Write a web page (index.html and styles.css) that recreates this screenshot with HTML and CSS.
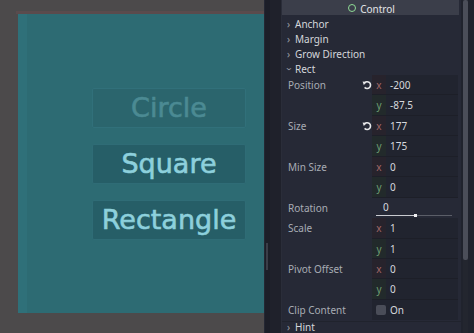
FILE: index.html
```html
<!DOCTYPE html>
<html>
<head>
<meta charset="utf-8">
<link rel="stylesheet" href="styles.css">
</head>
<body>
<div class="app">
  <div class="viewport">
    <div class="axis-x"></div>
    <div class="canvas">
      <div class="buttons">
        <div class="btn disabled">Circle</div>
        <div class="btn">Square</div>
        <div class="btn">Rectangle</div>
      </div>
    </div>
  </div>
  <div class="split"><div class="grab"></div></div>
  <div class="inspector">
    <div class="strip"></div>
    <div class="panel">
      <div class="header"><span class="node-icon"></span>Control</div>
      <div class="section"><span class="chev">›</span>Anchor</div>
      <div class="section"><span class="chev">›</span>Margin</div>
      <div class="section"><span class="chev">›</span>Grow Direction</div>
      <div class="section"><span class="chev down">›</span>Rect</div>

      <div class="prop">
        <div class="label">Position</div>
        <div class="revert"><svg viewBox="0 0 10 10" width="10" height="10"><path d="M2.3 3.2 A3.4 3.4 0 1 1 2.6 7.4" fill="none" stroke="#e8e8ea" stroke-width="1.6"/><path d="M0.6 1.4 L4.6 1.9 L1.8 4.9 Z" fill="#e8e8ea"/></svg></div>
        <div class="fields">
          <div class="field"><span class="ax x">x</span><span class="val">-200</span></div>
          <div class="field"><span class="ax y">y</span><span class="val">-87.5</span></div>
        </div>
      </div>
      <div class="prop">
        <div class="label">Size</div>
        <div class="revert"><svg viewBox="0 0 10 10" width="10" height="10"><path d="M2.3 3.2 A3.4 3.4 0 1 1 2.6 7.4" fill="none" stroke="#e8e8ea" stroke-width="1.6"/><path d="M0.6 1.4 L4.6 1.9 L1.8 4.9 Z" fill="#e8e8ea"/></svg></div>
        <div class="fields">
          <div class="field"><span class="ax x">x</span><span class="val">177</span></div>
          <div class="field"><span class="ax y">y</span><span class="val">175</span></div>
        </div>
      </div>
      <div class="prop">
        <div class="label">Min Size</div>
        <div class="fields">
          <div class="field"><span class="ax x">x</span><span class="val">0</span></div>
          <div class="field"><span class="ax y">y</span><span class="val">0</span></div>
        </div>
      </div>
      <div class="prop single">
        <div class="label">Rotation</div>
        <div class="slider">
          <span class="sval">0</span>
          <div class="track"><div class="fill"></div><div class="knob"></div></div>
        </div>
      </div>
      <div class="prop">
        <div class="label">Scale</div>
        <div class="fields">
          <div class="field"><span class="ax x">x</span><span class="val">1</span></div>
          <div class="field"><span class="ax y">y</span><span class="val">1</span></div>
        </div>
      </div>
      <div class="prop">
        <div class="label">Pivot Offset</div>
        <div class="fields">
          <div class="field"><span class="ax x">x</span><span class="val">0</span></div>
          <div class="field"><span class="ax y">y</span><span class="val">0</span></div>
        </div>
      </div>
      <div class="prop single">
        <div class="label">Clip Content</div>
        <div class="check"><span class="box"></span><span class="val">On</span></div>
      </div>
      <div class="section hint"><span class="chev">›</span>Hint</div>
    </div>
    <div class="scroll"><div class="thumb"></div></div>
  </div>
</div>
</body>
</html>
```

FILE: styles.css
```css
* { box-sizing: border-box; }
html, body { margin: 0; padding: 0; }
body {
  width: 474px;
  height: 333px;
  overflow: hidden;
  background: #20232d;
  font-family: "Noto Sans", "Open Sans", sans-serif;
}
.app {
  display: flex;
  width: 474px;
  height: 333px;
}
.viewport {
  width: 264px;
  height: 333px;
  background: #4c4a4b;
  display: flex;
  flex-direction: column;
  padding-top: 11px;
}
.axis-x {
  height: 3px;
  margin-left: 16px;
  background: #5a4b4d;
}
.canvas {
  margin-left: 18px;
  width: 246px;
  height: 299px;
  background: #2d6b73;
  border-left: 9px solid #2f7079;
  padding-top: 74px;
  padding-left: 65px;
}
.buttons {
  width: 154px;
  display: flex;
  flex-direction: column;
  gap: 16px;
}
.btn {
  height: 40px;
  background: #265e67;
  border: 1px solid #2f6c76;
  border-radius: 2px;
  color: #8dd0dc;
  -webkit-text-stroke: 0.6px #8dd0dc;
  font-family: "DejaVu Sans", sans-serif;
  font-size: 27px;
  line-height: 38px;
  text-align: center;
}
.btn.disabled {
  background: #2b656d;
  border-color: #31707a;
  color: #4b8a93;
  -webkit-text-stroke: 0.6px #4b8a93;
}
.split {
  width: 6px;
  background: #1c1e28;
  border-left: 1px solid #242733;
  position: relative;
}
.grab {
  position: absolute;
  left: 1px;
  top: 243px;
  width: 2px;
  height: 27px;
  background: #3a3d48;
}
.inspector {
  flex: 1;
  display: flex;
  background: #20232d;
}
.strip {
  width: 12px;
  background: #1f212b;
  border-right: 1px solid #2a2d39;
}
.panel {
  width: 179px;
  background: #262936;
  display: flex;
  flex-direction: column;
  color: #d4d6db;
  font-size: 10px;
}
.header {
  height: 15px;
  margin-right: 2px;
  background: #3b3e4a;
  display: flex;
  align-items: center;
  justify-content: center;
  gap: 4px;
  color: #e2e3e6;
  font-size: 10px;
  padding-left: 2px;
  padding-top: 2px;
}
.node-icon {
  width: 8px;
  height: 8px;
  border: 1.5px solid #8edb95;
  border-radius: 50%;
  margin-top: -1px;
}
.section {
  height: 15px;
  display: flex;
  align-items: center;
  padding-left: 5px;
  padding-top: 2px;
  color: #d4d6db;
}
.chev {
  display: inline-block;
  width: 8px;
  color: #9a9da6;
  font-size: 10px;
  line-height: 10px;
}
.chev.down {
  transform: rotate(90deg);
  width: 6px;
  margin-right: 2px;
  text-align: center;
}
.hint {
  border-top: 1px solid #20232d;
  height: 12px;
  padding-top: 0;
  margin-top: 0.5px;
  line-height: 12px;
}
.prop {
  display: flex;
  align-items: flex-start;
  position: relative;
}
.label {
  width: 90px;
  height: 20.45px;
  line-height: 20px;
  padding-left: 6px;
  color: #a8acb4;
}
.revert {
  position: absolute;
  left: 80px;
  top: 5px;
  width: 10px;
  height: 10px;
}
.revert svg { display: block; }
.fields {
  width: 86px;
  display: flex;
  flex-direction: column;
  background: #21242f;
}
.field {
  height: 20.45px;
  display: flex;
  align-items: stretch;
  border-bottom: 1px solid #1d1f28;
  line-height: 20px;
}
.ax {
  width: 14px;
  text-align: center;
  font-size: 10px;
}
.ax.x { color: #a26868; background: #27232c; }
.ax.y { color: #6e9d73; background: #222a2b; }
.val {
  padding-left: 4px;
  color: #d6d8dd;
}
.slider {
  width: 86px;
  height: 20.45px;
  position: relative;
}
.sval {
  position: absolute;
  left: 11px;
  top: 2px;
  color: #d6d8dd;
}
.track {
  position: absolute;
  left: 4px;
  top: 17px;
  width: 76px;
  height: 1px;
  background: #5b5e68;
}
.fill {
  width: 39px;
  height: 1px;
  background: #c9cbd0;
}
.knob {
  position: absolute;
  left: 38px;
  top: -1px;
  width: 3px;
  height: 3px;
  background: #f0f0f2;
}
.check {
  width: 86px;
  height: 20.45px;
  display: flex;
  align-items: center;
  background: #21242f;
  padding-left: 4px;
}
.box {
  width: 10px;
  height: 10px;
  border-radius: 2px;
  background: #4a4d58;
}
.check .val { padding-left: 4px; }
.scroll {
  width: 5px;
  margin-left: 2px;
  background: #23262f;
}
.thumb {
  height: 260px;
  background: #4b4e59;
  border-radius: 2px;
}
```
